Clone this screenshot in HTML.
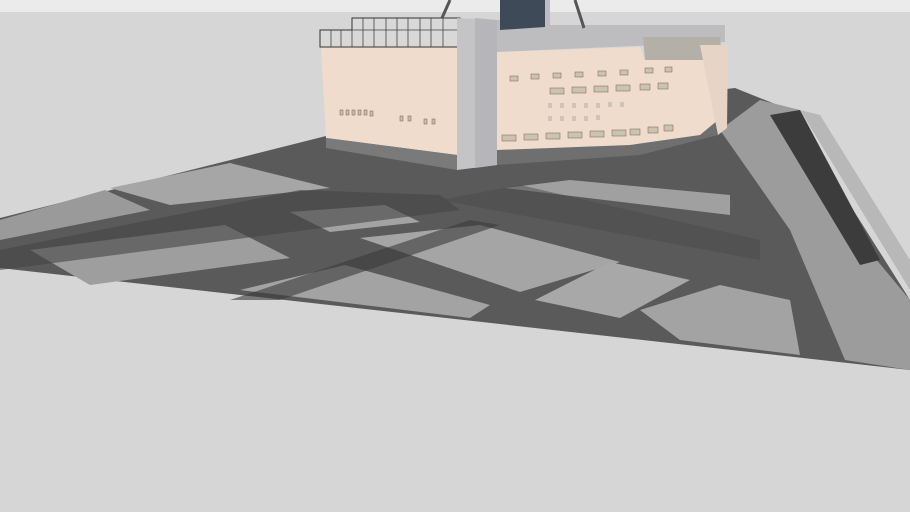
<!DOCTYPE html>
<html><head><style>html,body{margin:0;padding:0;width:910px;height:512px;overflow:hidden;background:#d6d6d6}</style></head>
<body>
<svg width="910" height="512" viewBox="0 0 910 512" xmlns="http://www.w3.org/2000/svg">
<rect width="910" height="512" fill="#d6d6d6"/>
<rect width="910" height="12" fill="#ebebeb"/>
<polygon points="0,218 330,135 735,88 790,110 910,300 910,370 0,268" fill="#5a5a5a"/>
<polygon points="30,250 225,225 290,258 90,285" fill="#9e9e9e"/>
<polygon points="110,188 230,163 330,188 170,205" fill="#a6a6a6"/>
<polygon points="0,220 105,190 150,210 0,240" fill="#9a9a9a"/>
<polygon points="290,212 385,205 420,222 330,232" fill="#a3a3a3"/>
<polygon points="360,238 480,225 620,262 520,292" fill="#a5a5a5"/>
<polygon points="240,290 345,265 490,305 470,318" fill="#a3a3a3"/>
<polygon points="535,300 610,262 690,280 620,318" fill="#a8a8a8"/>
<polygon points="640,310 720,285 790,300 800,355 680,340" fill="#a3a3a3"/>
<polygon points="505,188 570,180 730,195 730,215" fill="#a0a0a0"/>
<polygon points="720,130 760,100 800,110 860,240 910,300 910,370 845,360 790,230" fill="#9c9c9c"/>
<polygon points="770,115 800,110 880,260 860,265" fill="#3c3c3c"/>
<polygon points="800,110 820,115 910,260 910,290" fill="#b8b8b8"/>
<polygon points="0,250 300,190 440,195 460,210 230,240 0,270" fill="#444" opacity=".6"/>
<polygon points="230,300 470,220 500,225 280,300" fill="#3a3a3a" opacity=".6"/>
<polygon points="440,200 520,185 760,240 760,260" fill="#4a4a4a" opacity=".5"/>
<polygon points="320,30 457,30 457,155 326,138" fill="#f0dccd"/>
<polygon points="326,138 457,155 457,170 326,148" fill="#7a7a7a"/>
<polygon points="320,30 352,30 352,18 460,18 460,47 320,47" fill="#d8d8d8" stroke="#333" stroke-width="1"/>
<g stroke="#444" stroke-width=".8">
<line x1="331" y1="30" x2="331" y2="47"/><line x1="341" y1="30" x2="341" y2="47"/><line x1="352" y1="30" x2="352" y2="47"/><line x1="363" y1="18" x2="363" y2="47"/><line x1="374" y1="18" x2="374" y2="47"/><line x1="386" y1="18" x2="386" y2="47"/><line x1="397" y1="18" x2="397" y2="47"/><line x1="408" y1="18" x2="408" y2="47"/><line x1="420" y1="18" x2="420" y2="47"/><line x1="431" y1="18" x2="431" y2="47"/><line x1="443" y1="18" x2="443" y2="47"/>
<line x1="352" y1="30" x2="460" y2="30"/>
</g>
<polygon points="457,18 497,20 497,165 457,170" fill="#c4c4c6"/>
<polygon points="475,18 497,20 497,165 475,168" fill="#b6b6ba"/>
<polygon points="497,20 520,20 520,0 550,0 550,25 725,25 725,42 497,52" fill="#bdbdbf"/>
<polygon points="497,52 640,47 645,60 710,58 718,120 697,140 630,155 497,162" fill="#f0dccd"/>
<polygon points="497,150 630,145 700,135 718,120 718,135 640,155 497,165" fill="#6f6f6f"/>
<polygon points="643,37 720,37 722,60 645,60" fill="#b4b0a8"/>
<polygon points="700,45 728,45 727,128 718,135" fill="#e6d4c6"/>
<polygon points="500,0 545,0 545,27 500,30" fill="#3e4a58"/>
<line x1="450" y1="0" x2="442" y2="18" stroke="#555" stroke-width="3"/>
<line x1="575" y1="0" x2="584" y2="28" stroke="#555" stroke-width="3"/>
<g fill="#cdbdaa" stroke="#7a5a4a" stroke-width=".5">
<rect x="340" y="110" width="3" height="5"/><rect x="346" y="110" width="3" height="5"/><rect x="352" y="110" width="3" height="5"/><rect x="358" y="110" width="3" height="5"/><rect x="364" y="110" width="3" height="5"/><rect x="370" y="111" width="3" height="5"/><rect x="400" y="116" width="3" height="5"/><rect x="408" y="116" width="3" height="5"/><rect x="424" y="119" width="3" height="5"/><rect x="432" y="119" width="3" height="5"/>
</g>
<g fill="#c8c4b0" stroke="#7a5a4a" stroke-width=".5">
<rect x="510" y="76" width="8" height="5"/><rect x="531" y="74" width="8" height="5"/><rect x="553" y="73" width="8" height="5"/><rect x="575" y="72" width="8" height="5"/><rect x="598" y="71" width="8" height="5"/><rect x="620" y="70" width="8" height="5"/><rect x="645" y="68" width="8" height="5"/><rect x="665" y="67" width="7" height="5"/>
<rect x="550" y="88" width="14" height="6"/><rect x="572" y="87" width="14" height="6"/><rect x="594" y="86" width="14" height="6"/><rect x="616" y="85" width="14" height="6"/><rect x="640" y="84" width="10" height="6"/><rect x="658" y="83" width="10" height="6"/>
<rect x="502" y="135" width="14" height="6"/><rect x="524" y="134" width="14" height="6"/><rect x="546" y="133" width="14" height="6"/><rect x="568" y="132" width="14" height="6"/><rect x="590" y="131" width="14" height="6"/><rect x="612" y="130" width="14" height="6"/><rect x="630" y="129" width="10" height="6"/><rect x="648" y="127" width="10" height="6"/><rect x="664" y="125" width="9" height="6"/>
</g>
<g fill="#d0c4b4">
<rect x="548" y="103" width="4" height="5"/><rect x="560" y="103" width="4" height="5"/><rect x="572" y="103" width="4" height="5"/><rect x="584" y="103" width="4" height="5"/><rect x="596" y="103" width="4" height="5"/><rect x="608" y="102" width="4" height="5"/><rect x="620" y="102" width="4" height="5"/><rect x="548" y="116" width="4" height="5"/><rect x="560" y="116" width="4" height="5"/><rect x="572" y="116" width="4" height="5"/><rect x="584" y="116" width="4" height="5"/><rect x="596" y="115" width="4" height="5"/>
</g>
</svg>
</body></html>
